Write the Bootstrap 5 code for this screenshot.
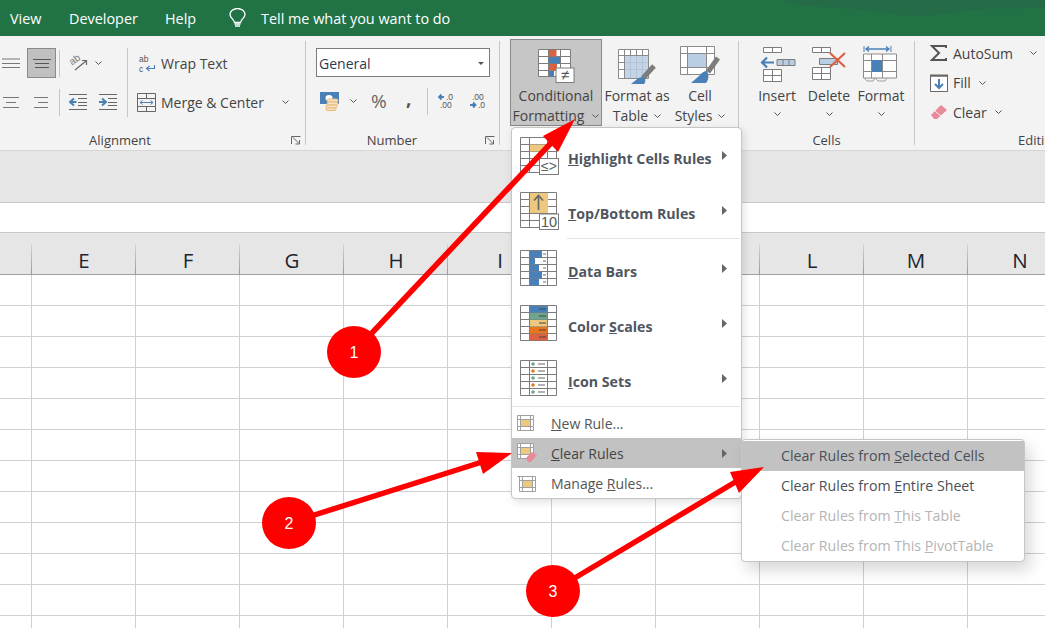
<!DOCTYPE html>
<html lang="en">
<head>
<meta charset="UTF-8">
<title>Conditional Formatting - Clear Rules</title>
<link href="https://cdn.jsdelivr.net/npm/bootstrap@5.3.0/dist/css/bootstrap.min.css" rel="stylesheet">
<style>
  html, body { height: 628px; overflow: hidden; }
  body { font-family: "Open Sans", "Noto Sans", sans-serif; font-size: 14px; color: #444; position: relative; background: #fff; }
  .defs { width: 0; height: 0; position: absolute; }

  .tabs { height: 36px; background: #217346; color: #fff; font-size: 14.4px; padding-left: 10px; position: relative; overflow: hidden; }
  .tabs .tab { line-height: 33px; }
  .tab-view { width: 59px; } .tab-dev { width: 96px; } .tab-help { width: 64px; } .tab-bulb { width: 32px; }
  .tabs .smear { position: absolute; right: 0; top: 0; }

  .ribbon { height: 115px; background: #f3f3f3; border-bottom: 1px solid #d6d6d6; padding-top: 5px; display: flex; white-space: nowrap; overflow: hidden; }
  .rg { height: 104px; border-right: 1px solid #c6c6c6; flex: none; display: flex; flex-direction: column; }
  .rg-body { height: 84px; display: flex; }
  .rg-label { height: 20px; font-size: 13px; display: flex; justify-content: space-between; }
  .rg-label span { line-height: 30px; height: 30px; text-align: center; }
  .rg-label svg { align-self: flex-end; }
  .lab-a { width: 240px; } .lab-n { width: 172px; } .lab-c { width: 100%; }
  .w-align { width: 306px; } .w-num { width: 194px; } .w-styles { width: 239px; } .w-cells { width: 176px; } .w-edit { width: 130px; border-right: 0; }
  .rrows { display: flex; flex-direction: column; gap: 9px; padding-top: 7px; }
  .rrow { height: 30px; display: flex; align-items: center; }
  .col-a { width: 127px; } .col-b { width: 177px; }
  .vsep { width: 1px; height: 69px; margin-top: 7px; background: #c6c6c6; flex: none; }
  .isep { width: 1px; height: 27px; background: #c6c6c6; flex: none; }
  .sel-box { width: 29px; height: 30px; background: #c0c0c0; border: 1px solid #8a8a8a; display: flex; align-items: center; justify-content: center; }
  .combo { width: 174px; height: 29px; background: #fff; border: 1px solid #7b7b7b; margin-left: 10px; padding: 1px 5px 0 2px; align-self: flex-end; justify-content: space-between; color: #2a3a55; }
  .pct { font-size: 19px; line-height: 1; color: #666; width: 16px; }
  .comma { font-size: 19px; font-weight: 700; line-height: 1; color: #555; margin-top: -6px; width: 5px; }

  .big { display: flex; flex-direction: column; align-items: center; flex: none; margin-top: -2px; height: 87px; border: 1px solid transparent; line-height: 20px; }
  .big .ico { height: 46px; flex: none; padding-top: 6px; }
  .big .ico.pt8 { padding-top: 8px; }
  .big.on { background: #c6c6c6; border-color: #8a8a8a; width: 92px; margin-left: 10px; }
  .w-fat { width: 70px; } .w-cs { width: 56px; } .w-cell { width: 52px; }
  .edit-rows { display: flex; flex-direction: column; gap: 5.5px; padding-left: 15px; width: 100%; }
  .edit-rows .rrow { height: 24px; }
  .ed-ico { width: 18px; flex: none; }
  .edit-label { padding-left: 103px; line-height: 30px; height: 20px; font-size: 13px; }

  .band { height: 52px; background: #e6e6e6; border-bottom: 1px solid #c8c8c8; }
  .fbar { height: 29px; background: #fff; }
  .cols { height: 43px; background: #e6e6e6; border-top: 1px solid #c8c8c8; border-bottom: 1px solid #a0a0a0; display: flex; }
  .cols > div { width: 104px; flex: none; text-align: center; font-size: 20.5px; color: #1c2433; line-height: 41px; padding-top: 7px; position: relative; }
  .cols > div:first-child { width: 32px; }
  .cols > div::after { content: ""; position: absolute; right: 0; top: 11px; bottom: 0; width: 1px; background: linear-gradient(#d4d4d4, #9a9a9a); }
  .cells { height: 353px; background-color: #fff;
    background-image: linear-gradient(to left, #d0d0d0 1px, transparent 1px), linear-gradient(to top, #d0d0d0 1px, transparent 1px);
    background-size: 104px 31px; background-position: -72px 0; }

  .dropdown-menu.cf { left: 511px; top: 127px; width: 231px; height: 372px; min-width: 0; padding: 0; margin: 0; border: 1px solid #c6c6c6; border-radius: 4px; font-size: 14px; z-index: 5; box-shadow: 2px 3px 8px rgba(0,0,0,.12); }
  .cf .dropdown-item { display: flex; align-items: center; padding: 0; color: #555; position: relative; background: transparent; }
  .cf .lg { height: 55px; padding-left: 8px; font-weight: 700; color: #4f5660; font-size: 14.2px; }
  .cf .lg .txt { margin-left: 8px; margin-top: 6px; }
  .cf .lg svg text { font-weight: 400; }
  .cf .sm { height: 30px; padding-left: 5px; }
  .cf .sm .txt { margin-left: 16px; }
  .cf .sm .txt.near { margin-left: 14px; }
  .cf .sm .txt.nearer { margin-left: 12px; }
  .cf .tri { margin-left: auto; margin-right: 14px; }
  .cf .dropdown-item.on { background: #c2c2c2; color: #444; }
  .cf .dropdown-divider { margin: 0; border-color: #e2e2e2; opacity: 1; }
  .cf .div1 { margin-left: 55px; margin-bottom: 2px; margin-right: 1px; }
  .cf .div2 { margin-bottom: 1px; margin-right: 1px; }

  .dropdown-menu.sub { left: 741px; top: 439px; width: 284px; height: 123px; min-width: 0; padding: 1px 0 0; margin: 0; border: 1px solid #c6c6c6; border-radius: 4px; font-size: 14.2px; z-index: 6; box-shadow: 5px 8px 16px rgba(0,0,0,.16); }
  .sub .dropdown-item { height: 30px; line-height: 30px; padding: 0 0 0 39px; color: #4a4f58; background: transparent; }
  .sub .dropdown-item.on { background: #c2c2c2; }
  .sub .dropdown-item.disabled { color: #b4b4b4; }

  .marks { position: absolute; left: 0; top: 0; z-index: 10; pointer-events: none; }
  .marks text { font-family: "Liberation Sans", sans-serif; font-size: 16px; fill: #fff; text-anchor: middle; }
  .t-num { font-family: "Liberation Sans", sans-serif; }

  .l2{margin-left:2px}.l3{margin-left:3px}.l5{margin-left:5px}.l6{margin-left:6px}.l7{margin-left:7px}.l8{margin-left:8px}.l9{margin-left:9px}.l11{margin-left:11px}.l12{margin-left:12px}.l14{margin-left:14px}.l15{margin-left:15px}.l16{margin-left:16px}.l19{margin-left:19px}
</style>
</head>
<body>

<svg class="defs" xmlns="http://www.w3.org/2000/svg">
  <symbol id="chev" viewBox="0 0 7 4"><path d="M.5.5l3 3 3-3" fill="none" stroke="#555"/></symbol>
  <symbol id="launch" viewBox="0 0 10 9"><path d="M.5 8V.5h9M2 1.500l6 6M8.500 4v4H4.500" fill="none" stroke="#666"/></symbol>
  <symbol id="tri" viewBox="0 0 5 9"><path d="M0 0l5 4.500L0 9z" fill="#666"/></symbol>

  <!-- menu grid base -->
  <symbol id="mgrid" viewBox="0 0 37 36"><path d="M.5.500h36v35H.5zM.5 7.500h36M.5 14.500h36M.5 21.500h36M.5 28.500h36M9.500.5v35M27.500.5v35" fill="#fff" stroke="#7c7c7c"/></symbol>
  <symbol id="smgrid" viewBox="0 0 18 17"><path d="M.5.5h16v15H.5zM.5 4.500h16M.5 11.500h16M3.500.5v15M13.500.5v15" fill="#fff" stroke="#a0a0a0"/><rect x="4" y="5" width="9" height="6" fill="#edc87e"/></symbol>
</svg>

<div class="tabs d-flex align-items-center">
  <div class="tab tab-view">View</div>
  <div class="tab tab-dev">Developer</div>
  <div class="tab tab-help">Help</div>
  <div class="tab-bulb d-flex">
    <svg width="17" height="20" viewBox="0 0 17 20"><path d="M5.500 14.500C5 11 1 10 1 6.500a7.500 6 0 0 1 15 0c0 3.500-4 4.500-4.500 8z" fill="none" stroke="#fff" stroke-width="1.300"/><path d="M5.500 16h6M6 18h5" stroke="#fff" stroke-width="1.300"/></svg>
  </div>
  <div class="tab">Tell me what you want to do</div>
  <svg class="smear" width="262" height="18" viewBox="0 0 262 18"><path d="M0 0c14 8 60 7 80 10 30 3 40 8 70 5 20-2 30-4 50-6 20-1 40 0 62-2V0z" fill="#266b48"/></svg>
</div>

<div class="ribbon">
  <!-- Alignment -->
  <section class="rg w-align">
    <div class="rg-body">
      <div class="rrows col-a">
        <div class="rrow">
          <svg class="l2" width="18" height="11" viewBox="0 0 18 11"><path d="M0 1h18M0 5.500h18M0 9.500h18" stroke="#777"/></svg>
          <div class="sel-box l7"><svg width="18" height="11" viewBox="0 0 18 11"><path d="M0 1.500h18M2 5.500h14M2 9.500h14" stroke="#555"/></svg></div>
          <div class="isep l3"></div>
          <svg class="l6" width="24" height="26" viewBox="-2 -4 24 26"><text x="2" y="9" font-size="10" fill="#777" class="t-num" transform="rotate(-35 7 7)">ab</text><path d="M7 16l11-9M14 6.500h4.500V11" fill="none" stroke="#666" stroke-width="1.200"/></svg>
          <svg class="l5" width="7" height="4"><use href="#chev"/></svg>
        </div>
        <div class="rrow">
          <svg class="l3" width="16" height="11" viewBox="0 0 16 11"><path d="M0 .5h16M3 5.500h10M0 10.500h16" stroke="#777"/></svg>
          <svg class="l15" width="14" height="11" viewBox="0 0 14 11"><path d="M0 .5h14M4 5.500h10M0 10.500h14" stroke="#777"/></svg>
          <div class="isep l11"></div>
          <svg class="l9" width="18" height="16" viewBox="0 0 18 16"><path d="M0 .5h18M9 4.500h9M9 8.500h9M9 11.500h9M0 15.500h18" stroke="#666"/><path d="M7.500 8H2M5 4.500L1 8l4 3.500" fill="none" stroke="#4a80b8" stroke-width="2"/></svg>
          <svg class="l12" width="18" height="16" viewBox="0 0 18 16"><path d="M0 .5h18M9 4.500h9M9 8.500h9M9 11.500h9M0 15.500h18" stroke="#666"/><path d="M0 8h6M3 4.500L7 8l-4 3.500" fill="none" stroke="#4a80b8" stroke-width="2"/></svg>
        </div>
      </div>
      <div class="vsep"></div>
      <div class="rrows col-b">
        <div class="rrow">
          <svg class="l11" width="17" height="23" viewBox="0 0 17 23"><text font-size="8.500" fill="#555" class="t-num"><tspan x="0" y="10.300">ab</tspan><tspan x="0" y="20.100">c</tspan></text><path d="M15.500 13v3.500H8M10.500 14l-3 2.500 3 2.500" fill="none" stroke="#4a80b8" stroke-width="1.100"/></svg>
          <span class="l5">Wrap Text</span>
        </div>
        <div class="rrow">
          <svg class="l9" width="19" height="19" viewBox="0 0 19 19"><path d="M.5.5h18v18H.5zM.5 5.500h18M.5 13.500h18M9.500.5v5M9.500 13.500v5" fill="#f3f3f3" stroke="#666"/><path d="M3 9.500h13M5.500 7.500L3 9.500l2.500 2M13.500 7.500l2.500 2-2.500 2" fill="none" stroke="#4a80b8"/></svg>
          <span class="l5">Merge &amp; Center</span>
          <svg class="ms-auto me-3" width="7" height="4"><use href="#chev"/></svg>
        </div>
      </div>
    </div>
    <div class="rg-label"><span class="lab-a">Alignment</span><svg class="me-1" width="10" height="9"><use href="#launch"/></svg></div>
  </section>

  <!-- Number -->
  <section class="rg w-num">
    <div class="rg-body">
      <div class="rrows">
        <div class="rrow combo"><span>General</span><svg width="6" height="3" viewBox="0 0 6 3"><path d="M0 0h6L3 3z" fill="#555"/></svg></div>
        <div class="rrow">
          <svg class="l14" width="19" height="19" viewBox="0 0 19 19"><rect x="0" y="0" width="19" height="12" fill="#4a80b8"/><ellipse cx="9" cy="6" rx="3.500" ry="3" fill="#fff"/><g fill="#f6e3c4" stroke="#e8b978"><rect x="7" y="7" width="11" height="3" rx="1.500"/><rect x="7" y="10" width="11" height="3" rx="1.500"/><rect x="6" y="13" width="11" height="3" rx="1.500"/><rect x="6" y="16" width="10" height="2.500" rx="1.200"/></g></svg>
          <svg class="l11" width="7" height="4"><use href="#chev"/></svg>
          <span class="pct l14">%</span>
          <span class="comma l19">,</span>
          <div class="isep l16"></div>
          <svg class="l9" width="17" height="16" viewBox="0 0 17 16"><path d="M7 4H2M4.500 1.500L2 4l2.500 2.500" fill="none" stroke="#4a80b8" stroke-width="1.800"/><text font-size="8.500" fill="#555" class="t-num"><tspan x="9" y="7">.0</tspan><tspan x="3" y="15">.00</tspan></text></svg>
          <svg class="l15" width="17" height="16" viewBox="0 0 17 16"><path d="M1 12h5M4 9.500L6.500 12 4 14.500" fill="none" stroke="#4a80b8" stroke-width="1.800"/><text font-size="8.500" fill="#555" class="t-num"><tspan x="3" y="7">.00</tspan><tspan x="9" y="15">.0</tspan></text></svg>
        </div>
      </div>
    </div>
    <div class="rg-label"><span class="lab-n">Number</span><svg class="me-1" width="10" height="9"><use href="#launch"/></svg></div>
  </section>

  <!-- Styles -->
  <section class="rg w-styles">
    <div class="rg-body">
      <div class="big on">
        <div class="ico pt8">
          <svg width="37" height="36" viewBox="0 0 37 36">
            <path d="M.5 1.500h32v27H.5zM.5 8.500h32M.5 15.500h32M.5 22.500h32M10.500 1.500v27M22.500 1.500v27" fill="#fff" stroke="#7c7c7c"/>
            <rect x="11" y="2" width="7.500" height="6.500" fill="#dc6141"/><rect x="11" y="9" width="11" height="6.500" fill="#4a80b8"/><rect x="11" y="16" width="8" height="6.500" fill="#dc6141"/><rect x="11" y="23" width="5" height="5.500" fill="#4a80b8"/>
            <rect x="18" y="20" width="18" height="14.500" fill="#fff" stroke="#7c7c7c"/><text x="27" y="32" font-size="15" fill="#555" text-anchor="middle" class="t-num">≠</text>
          </svg>
        </div>
        <div>Conditional</div>
        <div class="d-flex align-items-center">Formatting<svg class="l8" width="7" height="4"><use href="#chev"/></svg></div>
      </div>
      <div class="big w-fat">
        <div class="ico pt8">
          <svg width="38" height="37" viewBox="0 0 38 37">
            <path d="M.5 1.500h30v29H.5zM.5 7.500h30M.5 14.500h30M.5 21.500h30M6.500 1.500v29M12.500 1.500v29M18.500 1.500v29M24.500 1.500v29" fill="#fff" stroke="#8a8a8a"/>
            <rect x="7" y="8" width="23" height="22" fill="#b9cde3" opacity=".85"/>
            <path d="M36 18L25 30" stroke="#7c7c7c" stroke-width="5"/><path d="M25 29c-3 0-5 1-7 3l-5 4h13c2-2 2-5-1-7z" fill="#4a80b8"/>
          </svg>
        </div>
        <div>Format as</div>
        <div class="d-flex align-items-center">Table<svg class="l6" width="7" height="4"><use href="#chev"/></svg></div>
      </div>
      <div class="big w-cs">
        <div class="ico">
          <svg width="40" height="39" viewBox="0 0 40 39">
            <path d="M.5.5h34v28H.5z" fill="#fff" stroke="#8a8a8a"/><path d="M7.500.5v28M26.500.5v28M.5 7.500h34M.5 21.500h34" stroke="#8a8a8a"/>
            <rect x="8" y="8" width="18" height="13" fill="#b9cde3"/>
            <path d="M38 12L28 26" stroke="#7c7c7c" stroke-width="5"/><path d="M27 25c-3 0-6 2-8 5l-8 7h15c3-3 3-9 1-12z" fill="#4a80b8"/>
          </svg>
        </div>
        <div>Cell</div>
        <div class="d-flex align-items-center">Styles<svg class="l6" width="7" height="4"><use href="#chev"/></svg></div>
      </div>
    </div>
    <div class="rg-label"></div>
  </section>

  <!-- Cells -->
  <section class="rg w-cells">
    <div class="rg-body ps-2 ms-1">
      <div class="big w-cell">
        <div class="ico">
          <svg width="37" height="36" viewBox="0 0 37 36">
            <path d="M4.500 1.500h18v5h-18zM13.500 1.500v5M4.500 23.500h18v12h-18zM4.500 29.500h18M13.500 23.500v12" fill="#fff" stroke="#7c7c7c"/>
            <path d="M18 13.500h18v6H18zM24 13.500v6M30 13.500v6" fill="#b9cde3" stroke="#7c7c7c"/>
            <path d="M15 16.500H3M8 11.500l-5 5 5 5" fill="none" stroke="#4a80b8" stroke-width="2.200"/>
          </svg>
        </div>
        <div>Insert</div>
        <div class="d-flex align-items-center h-100 mt-n1 pb-1"><svg width="7" height="4"><use href="#chev"/></svg></div>
      </div>
      <div class="big w-cell">
        <div class="ico">
          <svg width="37" height="36" viewBox="0 0 37 36">
            <path d="M1.500 1.500h18v5h-18zM10.500 1.500v5M1.500 21.500h18v12h-18zM1.500 27.500h18M10.500 21.500v12" fill="#fff" stroke="#7c7c7c"/>
            <path d="M8.500 12.500h18v6h-18z" fill="#b9cde3" stroke="#7c7c7c"/>
            <path d="M19 7l15 14M34 7L19 21" stroke="#dc6141" stroke-width="2.200"/>
          </svg>
        </div>
        <div>Delete</div>
        <div class="d-flex align-items-center h-100 mt-n1 pb-1"><svg width="7" height="4"><use href="#chev"/></svg></div>
      </div>
      <div class="big w-cell">
        <div class="ico">
          <svg width="36" height="38" viewBox="0 0 36 38">
            <path d="M1 0v6M28 0v6" stroke="#4a80b8"/><path d="M3 3h23M6 .5L3 3l3 2.500M23 .5L26 3l-3 2.500" fill="none" stroke="#4a80b8" stroke-width="1.400"/>
            <path d="M.5 8h33v24H.5zM.5 14.500h33M.5 25.500h33M8.500 8v24M19.500 8v24" fill="#fff" stroke="#8a8a8a"/>
            <rect x="9" y="14" width="10" height="12" fill="#4a80b8"/>
            <path d="M1 32l3 3h6l2-3M12 32l3 3h7l2-3" fill="none" stroke="#a0a0a0"/>
          </svg>
        </div>
        <div>Format</div>
        <div class="d-flex align-items-center h-100 mt-n1 pb-1"><svg width="7" height="4"><use href="#chev"/></svg></div>
      </div>
    </div>
    <div class="rg-label"><span class="lab-c">Cells</span></div>
  </section>

  <!-- Editing -->
  <section class="rg w-edit">
    <div class="rg-body">
      <div class="edit-rows">
        <div class="rrow">
          <svg class="ed-ico" height="16" viewBox="0 0 18 16"><path d="M16 3V1H2l7 7-7 7h14v-2" fill="none" stroke="#555" stroke-width="2"/></svg>
          <span class="l5">AutoSum</span>
          <svg class="ms-auto me-2" width="7" height="4"><use href="#chev"/></svg>
        </div>
        <div class="rrow">
          <svg class="ed-ico" height="18" viewBox="0 0 18 18"><path d="M.5 2h17v15.500H.5z" fill="#fff" stroke="#666"/><path d="M0 .5h18v2H0z" fill="#666"/><path d="M9 5v9M5 10l4 4 4-4" fill="none" stroke="#4a80b8" stroke-width="2"/></svg>
          <span class="l5">Fill</span>
          <svg class="l8" width="7" height="4"><use href="#chev"/></svg>
        </div>
        <div class="rrow">
          <svg class="ed-ico" height="16" viewBox="0 0 18 16"><path d="M1 11l10-10 6 5-10 9H4z" fill="#e88a9a"/><path d="M5 7l6 5" stroke="#f3f3f3"/></svg>
          <span class="l5">Clear</span>
          <svg class="l8" width="7" height="4"><use href="#chev"/></svg>
        </div>
      </div>
    </div>
    <div class="edit-label">Editing</div>
  </section>
</div>

<div class="band"></div>
<div class="fbar"></div>
<div class="cols">
  <div></div><div>E</div><div>F</div><div>G</div><div>H</div><div>I</div><div></div><div></div><div>L</div><div>M</div><div>N</div>
</div>
<div class="cells"></div>

<!-- Conditional Formatting menu -->
<ul class="dropdown-menu show cf list-unstyled">
  <li><a class="dropdown-item lg">
    <svg width="40" height="38" viewBox="0 0 40 38"><use href="#mgrid" width="37" height="36"/><rect x="10" y="7.500" width="18" height="7" fill="#edc87e"/><rect x="19.500" y="21.500" width="19" height="16" fill="#fff" stroke="#7c7c7c"/><text x="29" y="34" font-size="14" fill="#666" text-anchor="middle" class="t-num">≤&gt;</text></svg>
    <span class="txt"><u>H</u>ighlight Cells Rules</span>
    <svg class="tri" width="5" height="9"><use href="#tri"/></svg>
  </a></li>
  <li><a class="dropdown-item lg">
    <svg width="40" height="38" viewBox="0 0 40 38"><use href="#mgrid" width="37" height="36"/><rect x="10" y="1" width="18" height="20" fill="#edc87e"/><path d="M18.500 18V4M14 8.500l4.500-5 4.500 5" fill="none" stroke="#666" stroke-width="1.600"/><rect x="19.500" y="22" width="19" height="15.500" fill="#fff" stroke="#7c7c7c"/><text x="29" y="35" font-size="14.500" fill="#555" text-anchor="middle" class="t-num">10</text></svg>
    <span class="txt"><u>T</u>op/Bottom Rules</span>
    <svg class="tri" width="5" height="9"><use href="#tri"/></svg>
  </a></li>
  <li><hr class="dropdown-divider div1"></li>
  <li><a class="dropdown-item lg">
    <svg width="40" height="38" viewBox="0 0 40 38"><use href="#mgrid" width="37" height="36"/><g fill="#4a80b8"><rect x="10" y="1" width="12" height="6.500"/><rect x="10" y="8" width="5" height="6.500"/><rect x="10" y="15" width="9" height="6.500"/><rect x="10" y="22" width="12" height="6.500"/><rect x="10" y="29" width="9" height="6.500"/></g><path d="M23 4h3M23 11h3M23 18h3M23 25h3M23 32h3" stroke="#666"/></svg>
    <span class="txt"><u>D</u>ata Bars</span>
    <svg class="tri" width="5" height="9"><use href="#tri"/></svg>
  </a></li>
  <li><a class="dropdown-item lg">
    <svg width="40" height="38" viewBox="0 0 40 38"><use href="#mgrid" width="37" height="36"/><rect x="10" y="1" width="17" height="6.500" fill="#4a80b8"/><rect x="10" y="8" width="17" height="6.500" fill="#6fa58a"/><rect x="10" y="15" width="17" height="6.500" fill="#edc87e"/><rect x="10" y="22" width="17" height="6.500" fill="#e8761f"/><rect x="10" y="29" width="17" height="6.500" fill="#dc6141"/><path d="M19 4h7M19 11h7M19 18h7M19 25h7M19 32h7" stroke="#444"/></svg>
    <span class="txt">Color <u>S</u>cales</span>
    <svg class="tri" width="5" height="9"><use href="#tri"/></svg>
  </a></li>
  <li><a class="dropdown-item lg">
    <svg width="40" height="38" viewBox="0 0 40 38"><use href="#mgrid" width="37" height="36"/><g fill="#6fa58a"><circle cx="13" cy="4" r="1.800"/><circle cx="13" cy="18" r="1.800"/><circle cx="13" cy="32" r="1.800"/></g><g fill="#e8761f"><circle cx="13" cy="11" r="1.800"/><circle cx="13" cy="25" r="1.800"/></g><path d="M18 4h7M18 11h7M18 18h7M18 25h7M18 32h7" stroke="#666"/></svg>
    <span class="txt"><u>I</u>con Sets</span>
    <svg class="tri" width="5" height="9"><use href="#tri"/></svg>
  </a></li>
  <li><hr class="dropdown-divider div2"></li>
  <li><a class="dropdown-item sm">
    <svg width="18" height="17"><use href="#smgrid"/></svg>
    <span class="txt"><u>N</u>ew Rule...</span>
  </a></li>
  <li><a class="dropdown-item sm on">
    <svg width="22" height="20" viewBox="0 0 22 20"><use href="#smgrid" width="18" height="17"/><path d="M9 15l6-6 5 3-6 7h-3z" fill="#e88a9a"/></svg>
    <span class="txt nearer"><u>C</u>lear Rules</span>
    <svg class="tri" width="5" height="9"><use href="#tri"/></svg>
  </a></li>
  <li><a class="dropdown-item sm">
    <svg width="20" height="19" viewBox="0 0 20 19"><path d="M.5 2.500h16v15" fill="none" stroke="#8a8a8a"/><use href="#smgrid" x="2" y="2" width="18" height="17"/></svg>
    <span class="txt near">Manage <u>R</u>ules...</span>
  </a></li>
</ul>

<!-- Clear Rules flyout -->
<ul class="dropdown-menu show sub list-unstyled">
  <li><a class="dropdown-item on">Clear Rules from <u>S</u>elected Cells</a></li>
  <li><a class="dropdown-item">Clear Rules from <u>E</u>ntire Sheet</a></li>
  <li><a class="dropdown-item disabled">Clear Rules from <u>T</u>his Table</a></li>
  <li><a class="dropdown-item disabled">Clear Rules from This <u>P</u>ivotTable</a></li>
</ul>

<!-- numbered callouts -->
<svg class="marks" width="1045" height="628" viewBox="0 0 1045 628">
  <g stroke="#f00" stroke-width="5.500"><path d="M354 352L552 142"/><path d="M289 523L482 462"/><path d="M553 591L737 481"/></g>
  <g fill="#f00">
    <path d="M575 119L543 136 558 152z"/>
    <path d="M512 453L476 452 483 474z"/>
    <path d="M764 467L730 472 739 493z"/>
    <ellipse cx="354" cy="352" rx="27" ry="26"/>
    <ellipse cx="289" cy="523" rx="27" ry="26"/>
    <ellipse cx="553" cy="591" rx="27" ry="26"/>
  </g>
  <text x="354" y="358">1</text>
  <text x="289" y="529">2</text>
  <text x="553" y="597">3</text>
</svg>

<script src="https://cdn.jsdelivr.net/npm/bootstrap@5.3.0/dist/js/bootstrap.bundle.min.js"></script>
</body>
</html>
